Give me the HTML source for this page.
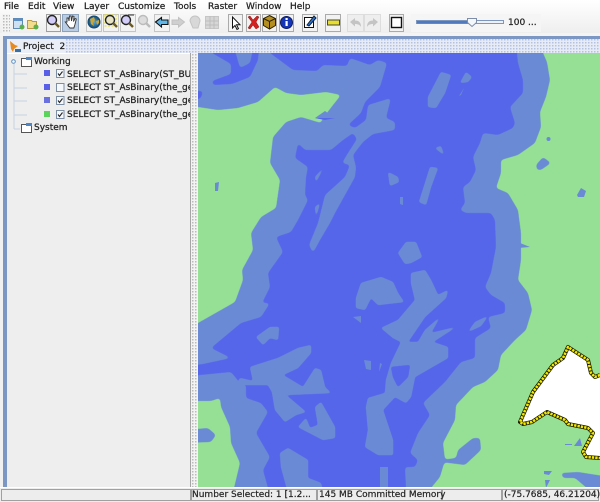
<!DOCTYPE html>
<html><head><meta charset="utf-8"><style>
html,body{margin:0;padding:0;background:#efefef}
body{width:600px;height:502px;position:relative;overflow:hidden;font-family:"DejaVu Sans",sans-serif;color:#222}
.t{position:absolute;white-space:nowrap;font-size:9px;line-height:12px;color:#222;-webkit-text-stroke:.25px #222}
.s{position:absolute;white-space:nowrap;font-size:9px;line-height:12px;top:489px;color:#222;-webkit-text-stroke:.2px #222}
svg{position:absolute;left:0;top:0}
</style></head><body>
<svg width="600" height="502" viewBox="0 0 600 502">
<defs>
<linearGradient id="top" x1="0" y1="0" x2="0" y2="1"><stop offset="0" stop-color="#fff"/><stop offset="1" stop-color="#ededed"/></linearGradient>
<pattern id="dots" width="3" height="3" patternUnits="userSpaceOnUse"><rect width="3" height="3" fill="#e6ebf5"/><rect width="1.5" height="1.5" fill="#b4c2e0"/></pattern>
<pattern id="grip" width="3" height="3" patternUnits="userSpaceOnUse"><rect width="3" height="3" fill="#f3f3f3"/><rect width="1.5" height="1.5" fill="#bbb"/></pattern>
<radialGradient id="gl"><stop offset="0" stop-color="#5ab0e0"/><stop offset="1" stop-color="#0c3f66"/></radialGradient>
<filter id="sm" filterUnits="userSpaceOnUse" x="150" y="20" width="500" height="500"><feGaussianBlur stdDeviation="1.6"/><feComponentTransfer><feFuncA type="linear" slope="5" intercept="-2"/></feComponentTransfer></filter>
<filter id="sm2" filterUnits="userSpaceOnUse" x="150" y="20" width="500" height="500"><feGaussianBlur stdDeviation="1"/><feComponentTransfer><feFuncA type="linear" slope="4" intercept="-1.2"/></feComponentTransfer></filter>
</defs>
<rect width="600" height="36" fill="url(#top)"/>
<rect x="0" y="33" width="600" height="3" fill="#f4f4f4"/>
<!-- map -->
<rect x="198" y="52" width="402" height="436" fill="#95e095"/>
<g fill="#6a8ad5" filter="url(#sm)">
<polygon points="185,40 541,40 543,53 547,62 550,80 546,97 540,112 541,127 535,143 518,155 501,160 501,173 496,188 508,193 518,210 521,233 521,260 518,280 528,293 532,310 526,330 515,340 501,355 498,370 485,382 473,387 456,405 455,420 443,443 445,460 440,477 431,488 428,500 232,500 234,488 240,463 231,443 230,427 221,407 220,398 211,401 185,401 185,331 198,323 235,302 243,280 242,270 253,250 251,233 261,217 276,208 280,180 270,163 273,137 286,122 301,117 321,123 323,118 333,105 341,95 326,92 301,95 286,93 275,87 258,102 238,108 218,110 198,107 185,104"/>
<polygon points="536,165 543,157 551,163 541,170 537,170"/>
<polygon points="441,460 456,458 458,450 473,438 480,438 481,450 465,465 441,462"/>
<polygon points="185,430 208,428 216,435 211,442 185,443"/>
<polygon points="561,473 578,472 610,477 595,495 575,478 563,478"/>
</g>
<g fill="#6a8ad5">
<polygon points="315,118 325,111 335,118 325,120"/>
<circle cx="548.500" cy="139" r="2"/>
<polygon points="577,195 581,188 586,191 584,197 578,197"/>
<polygon points="215,183 219,182 218,191 215,191"/>
<polygon points="515,241 530,247 518,248"/>
<polygon points="544,471 552,471 549,475 544,474"/>
<polygon points="545,480 550,480 546,488"/>
<polygon points="565,444 572,444 572,445 565,445"/>
<polygon points="574,446 580,438 582,446"/>
</g>
<g fill="#5666ea" filter="url(#sm)">
<polygon points="208,40 212,53 231,64 231,74 212,81 213,85 232,84 250,77 258,60 260,40 255,40 250,63 240,68 232,40"/>
<polygon points="268,40 517,40 517,53 518,63 523,80 523,93 510,107 515,123 513,128 498,135 483,133 480,143 473,157 476,170 470,182 463,187 465,203 460,210 466,213 491,213 495,220 496,247 491,273 485,287 491,295 505,303 505,313 488,317 491,328 475,338 475,358 461,362 445,382 423,403 430,415 418,433 410,453 418,460 415,467 405,467 406,488 406,500 268,500 268,488 263,470 270,457 256,433 268,412 261,403 246,398 246,385 240,383 231,372 190,376 190,366 203,364 231,358 211,348 241,323 261,317 270,303 262,303 270,287 268,273 283,252 276,237 291,232 298,220 308,200 305,195 306,177 308,167 295,158 298,143 305,150 331,150 343,140 353,133 357,139 348,153 342,163 350,165 345,177 325,195 318,223 309,245 313,253 320,240 330,223 335,213 355,177 356,167 353,155 363,142 373,134 395,130 395,122 386,118 391,98 368,105 366,120 355,128 348,125 361,113 365,102 380,87 387,63 378,60 370,65 350,58 347,66 323,65 317,71 293,70 270,53"/>
<polygon points="190,91 203,91 201,98 190,102"/>
</g>
<polygon points="315,118 335,118 325,120" fill="#5666ea"/>
<g fill="#6a8ad5" filter="url(#sm2)">
<polygon points="428,97 441,72 451,75 445,93 436,108 428,107"/>
<polygon points="460,83 466,72 472,77 468,82"/>
<polygon points="435,148 441,146 444,155"/>
<polygon points="388,172 398,177 399,182 390,186"/>
<polygon points="430,167 438,168 431,187 426,205 419,202 426,180"/>
<polygon points="398,253 406,242 416,242 422,257 411,263 405,264"/>
<polygon points="315,177 324,167 316,182"/>
<polygon points="315,207 320,203 316,217"/>
<!-- island -->
<polygon points="250,367 278,358 298,348 311,345 311,353 298,368 283,375 303,387 315,368 321,370 325,387 331,393 286,395 306,412 296,415 285,422 275,410 272,392 268,385 236,385 240,378 253,381"/>
<polygon points="321,402 335,427 335,438 323,440 298,427 306,418 310,428 318,425 315,407"/>
<polygon points="256,337 270,327 279,327 278,340 270,338 263,345"/>
<polygon points="356,298 361,283 381,277 393,282 398,293 404,302 378,305 371,298 365,310 356,308"/>
<!-- arm -->
<polygon points="411,283 411,273 425,270 431,280 438,295 448,290 446,298 425,317 408,342 418,342 425,330 440,317 431,333 456,327 433,342 448,347 448,358 415,377 411,397 406,403 395,397 383,410 393,440 393,455 378,455 365,447 368,430 366,407 368,398 385,393 386,380 391,363 401,342 393,338 381,328 398,320 415,300"/>
<polygon points="468,332 475,322 488,316 481,326"/>
<polygon points="280,453 288,448 308,460 308,478 321,483 325,500 290,500 281,467"/>
</g>
<g fill="#6a8ad5">
<polygon points="459,96 464,88 461,95"/>
<polygon points="400,197 403,197 403,205 400,204"/>
<polygon points="353,317 361,316 361,323"/>
<polygon points="364,360 371,361 371,370 366,369"/>
<polygon points="380,363 382,364 379,372"/>
<polygon points="380,467 388,467 388,488 380,488"/>
</g>
<polygon points="391,367 410,365 408,377 398,387 393,377" fill="#5666ea" filter="url(#sm2)"/>
<polygon points="520,422 533,392 553,365 563,358 568,347 588,360 591,373 595,377 600,375 600,458 586,457 583,452 593,433 588,428 568,424 565,420 547,412 532,422 523,424" fill="#fff"/>
<g fill="none" stroke-linejoin="round">
<polyline points="600,375 595,377 591,373 588,360 568,347 563,358 553,365 533,392 520,422 523,424 532,422 547,412 565,420 568,424 588,428 593,433 583,452 586,457 600,458" stroke="#1a1a00" stroke-width="4"/>
<polyline points="600,375 595,377 591,373 588,360 568,347 563,358 553,365 533,392 520,422 523,424 532,422 547,412 565,420 568,424 588,428 593,433 583,452 586,457 600,458" stroke="#f2e800" stroke-width="2.6" stroke-dasharray="2.4 1"/>
</g>
<!-- frame -->
<rect x="0" y="36" width="600" height="3" fill="#7c97c4"/>
<rect x="0" y="39" width="600" height="14" fill="url(#dots)"/>
<rect x="3" y="39" width="62" height="14" fill="#e9eef7"/>
<rect x="0" y="36" width="3" height="452" fill="#f1f1f1"/>
<rect x="3" y="36" width="4" height="452" fill="#7c97c4"/>
<rect x="7" y="53" width="184" height="435" fill="#eeeeee"/>
<rect x="7" y="53" width="184" height="1" fill="#fff"/>
<rect x="190" y="53" width="1" height="435" fill="#a5a5a5"/>
<rect x="191" y="53" width="7" height="435" fill="url(#grip)"/>
<!-- project icon -->
<path d="M10 41l5 4 3 1-4 3-1 3-2-3z" fill="#e98a1e"/><path d="M15 49h6v3h-6z" fill="#3a6f9f"/>
<!-- grip -->
<rect x="2" y="14" width="8" height="19" fill="url(#grip)"/>
<!-- new layer icons -->
<rect x="13.500" y="18.500" width="9" height="10" fill="#cfe0f2" stroke="#5f8ab8"/><rect x="14" y="19" width="8" height="2" fill="#5a8fc5"/><circle cx="22" cy="27" r="2.500" fill="#5bb04a"/>
<path d="M27.500 20.500h4l1 1h4v7h-9z" fill="#f2dc8e" stroke="#b99b45"/><circle cx="36" cy="27" r="2.500" fill="#5bb04a"/>
<!-- buttons -->
<rect x="46.500" y="14.500" width="14" height="17" fill="#f1f1f1" stroke="#9f9f9f"/>
<rect x="62.500" y="14.500" width="16" height="17" fill="#b9cde4" stroke="#8ba2bd"/>
<g fill="#f2f2f2" stroke="#c5c5c5"><rect x="86.500" y="14.500" width="15" height="17"/><rect x="103.500" y="14.500" width="15" height="17"/><rect x="120.500" y="14.500" width="15" height="17"/><rect x="154.500" y="14.500" width="15" height="17"/></g>
<g fill="#f2f2f2" stroke="#aaa"><rect x="228.500" y="14.500" width="14" height="17"/><rect x="246.500" y="14.500" width="14" height="17"/><rect x="262.500" y="14.500" width="14" height="17"/><rect x="279.500" y="14.500" width="14" height="17"/><rect x="302.500" y="14.500" width="15" height="17"/><rect x="325.500" y="14.500" width="15" height="17"/><rect x="389.500" y="14.500" width="14" height="17"/></g>
<!-- zoom icon -->
<g id="z1"><circle cx="52" cy="20" r="4.500" fill="#d3cdfa" stroke="#222" stroke-width="1.400"/><path d="M55 23l4 4" stroke="#6a5a1e" stroke-width="2.400"/></g>
<!-- hand -->
<path d="M67 22l0-4 1.500 0 .5 3 .5-5 1.500 0 .5 5 1-5 1.500.5-.5 5 1.500-3 1.300.5-1.500 6-1 3h-4l-3-4-1.500-2z" fill="#fff" stroke="#333" stroke-width=".9"/>
<!-- globe -->
<circle cx="94" cy="22" r="6.500" fill="url(#gl)"/><path d="M90 19l4-2 1 3-2 3 1 3-3-2zM96 21l3-1 0 3-2 2z" fill="#c9a73c"/>
<!-- zoom yellow -->
<rect x="105" y="15" width="11" height="11" fill="none" stroke="#e8df1c" stroke-dasharray="2 1.500"/>
<circle cx="110" cy="20" r="4.500" fill="#e7e3c4" stroke="#222" stroke-width="1.400"/><path d="M113 23l4 4" stroke="#6a5a1e" stroke-width="2.400"/>
<circle cx="126" cy="20" r="4.500" fill="#d3cdfa" stroke="#222" stroke-width="1.400"/><path d="M129 23l4 4" stroke="#6a5a1e" stroke-width="2.400"/><path d="M128 15h6" stroke="#333"/>
<circle cx="143" cy="20" r="4.500" fill="#ddd" stroke="#bbb" stroke-width="1.400"/><path d="M146 23l4 4" stroke="#bbb" stroke-width="2.400"/>
<!-- arrows -->
<path d="M155.500 22l6-4.500v2.500h6.500v4.500h-6.500v2.500z" fill="#5fb6e8" stroke="#111" stroke-width="1.100"/>
<path d="M184.500 22l-6-4.500v2.500h-6.500v4.500h6.500v2.500z" fill="#cfcfcf" stroke="#c2c2c2"/>
<path d="M190 21a5 5 0 0 1 10 0l-2 7h-5z" fill="#d8d8d8" stroke="#c4c4c4"/>
<rect x="205.500" y="16.500" width="13" height="12" fill="#d6d6d6" stroke="#c6c6c6"/><path d="M205 21h14M205 25h14M210 16v13M214 16v13" stroke="#bdbdbd"/>
<!-- cursor -->
<path d="M232.500 17l0 11 2.500-2.500 2 4 1.500-.8-2-4h3.500z" fill="#fff" stroke="#111"/>
<!-- red x -->
<path d="M248 17l4 5-4 6 2 1 3-4 3 4 3-2-3-5 3-5-2-1-4 4-3-4z" fill="#d42020" stroke="#8c1010" stroke-width=".5"/>
<!-- box -->
<path d="M269.500 15.500l6 3v7l-6 3.500-6-3.500v-7z" fill="#b58f1f" stroke="#2b2100"/><path d="M263.500 18.500l6 3 6-3M269.500 21.500v8" stroke="#2b2100" fill="none"/>
<!-- info -->
<circle cx="286.500" cy="22.500" r="6" fill="#1535b8" stroke="#0a1a60"/><rect x="285.500" y="21" width="2.200" height="5" fill="#fff"/><rect x="285.500" y="18" width="2.200" height="2" fill="#fff"/>
<!-- edit -->
<rect x="304.500" y="17.500" width="9" height="10" fill="#fff" stroke="#111"/><path d="M307 25l7-9 2 2-7 8z" fill="#2b73d6" stroke="#123"/>
<!-- ruler -->
<rect x="327.500" y="20" width="12" height="5" fill="#e8df2a" stroke="#444"/>
<!-- undo redo -->
<rect x="347.500" y="14.500" width="16" height="17" fill="#eee" stroke="#ddd"/><rect x="364.500" y="14.500" width="16" height="17" fill="#eee" stroke="#ddd"/>
<path d="M350 22l5-4v2.500c4 0 6 2 6 6.500-1-2-3-3-6-3v2.500z" fill="#c4c4c4"/>
<path d="M378 22l-5-4v2.500c-4 0-6 2-6 6.500 1-2 3-3 6-3v2.500z" fill="#c4c4c4"/>
<!-- square -->
<rect x="391.500" y="17.500" width="10" height="10" fill="#fff" stroke="#111" stroke-width="1.400"/>
<!-- slider -->
<rect x="411" y="14" width="130" height="18" fill="#f5f5f5"/>
<rect x="416.500" y="20.500" width="87" height="3" fill="#eef2f8" stroke="#7e97bf"/>
<rect x="417" y="21" width="55" height="2.500" fill="#4f7ac0"/>
<path d="M467.500 18.500h9v4l-4.500 4-4.500-4z" fill="#f4f7fb" stroke="#7e8ea8"/>
<!-- tree -->
<path d="M14 64v65M14 74h13M14 88h13M14 101h13M14 115h13M14 129h6" stroke="#c6d2e2" fill="none"/>
<circle cx="13.500" cy="61.500" r="1.800" fill="#fff" stroke="#5d8cc0"/>
<rect x="21.500" y="58.500" width="10" height="8" fill="#fff" stroke="#555"/><rect x="26" y="57" width="6" height="3" fill="#4f86c6"/>
<rect x="21.500" y="124.500" width="10" height="8" fill="#fff" stroke="#555"/><rect x="26" y="123" width="6" height="3" fill="#4f86c6"/>
<rect x="44" y="70" width="6" height="6" fill="#5a5fe8"/><rect x="44" y="84" width="6" height="6" fill="#5a5fe8"/><rect x="44" y="97" width="6" height="6" fill="#6a70e0"/><rect x="44" y="111" width="6" height="6" fill="#5bd45b"/>
<g fill="#f5f8fc" stroke="#7c8ea6"><rect x="56.500" y="69.500" width="7.500" height="8"/><rect x="56.500" y="83.500" width="7.500" height="8"/><rect x="56.500" y="96.500" width="7.500" height="8"/><rect x="56.500" y="110.500" width="7.500" height="8"/></g>
<g fill="none" stroke="#222" stroke-width="1.100"><path d="M58 73.500l1.500 2 3-4"/><path d="M58 100.500l1.500 2 3-4"/><path d="M58 114.500l1.500 2 3-4"/></g>
<!-- status -->
<rect x="0" y="487" width="600" height="15" fill="#ededed"/>
<rect x="0" y="487" width="600" height="1" fill="#fff"/>
<g fill="none" stroke="#a0a0a0"><rect x="1.500" y="489.500" width="189" height="11"/><rect x="191.500" y="489.500" width="125" height="11"/><rect x="317.500" y="489.500" width="124" height="11"/><rect x="442.500" y="489.500" width="59" height="11"/><rect x="502.500" y="489.500" width="96" height="11"/></g>
</svg>
<div class="t" style="left:4px;top:1px">File</div>
<div class="t" style="left:28px;top:1px">Edit</div>
<div class="t" style="left:53px;top:1px">View</div>
<div class="t" style="left:84px;top:1px">Layer</div>
<div class="t" style="left:118px;top:1px">Customize</div>
<div class="t" style="left:174px;top:1px">Tools</div>
<div class="t" style="left:208px;top:1px">Raster</div>
<div class="t" style="left:246px;top:1px">Window</div>
<div class="t" style="left:290px;top:1px">Help</div>
<div class="t" style="left:508px;top:17px">100 ...</div>
<div class="t" style="left:23px;top:41px">Project&nbsp; 2</div>
<div class="t" style="left:34px;top:56px">Working</div>
<div class="t" style="left:67px;top:69px;width:123px;overflow:hidden">SELECT ST_AsBinary(ST_BUFFER</div>
<div class="t" style="left:67px;top:82px;width:123px;overflow:hidden">SELECT ST_AsBinary(the_geom</div>
<div class="t" style="left:67px;top:95px;width:123px;overflow:hidden">SELECT ST_AsBinary(the_geom</div>
<div class="t" style="left:67px;top:109px;width:123px;overflow:hidden">SELECT ST_AsBinary(the_geom</div>
<div class="t" style="left:34px;top:122px">System</div>
<div class="s" style="left:192px">Number Selected: 1 [1.2...</div>
<div class="s" style="left:319px">145 MB Committed Memory</div>
<div class="s" style="left:504px">(-75.7685, 46.21204)</div>
</body></html>
